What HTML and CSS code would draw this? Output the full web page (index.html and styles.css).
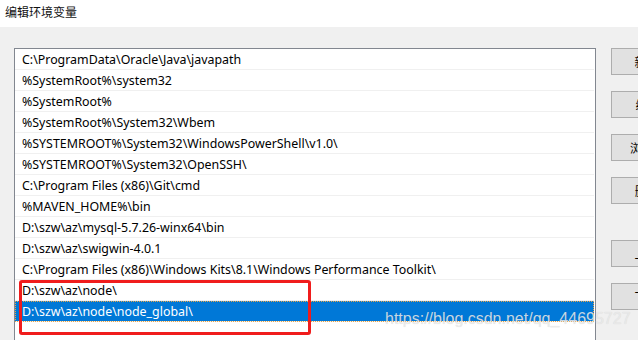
FILE: index.html
```html
<!DOCTYPE html>
<html lang="zh-CN">
<head>
  <meta charset="UTF-8">
  <title>编辑环境变量</title>
  <link rel="stylesheet" href="styles.css">
</head>
<body>

<div class="window">
  <div class="titlebar">编辑环境变量</div>

  <div class="content">
    <div class="pathlist">
      <div class="row">C:\ProgramData\Oracle\Java\javapath</div>
      <div class="row">%SystemRoot%\system32</div>
      <div class="row">%SystemRoot%</div>
      <div class="row">%SystemRoot%\System32\Wbem</div>
      <div class="row">%SYSTEMROOT%\System32\WindowsPowerShell\v1.0\</div>
      <div class="row">%SYSTEMROOT%\System32\OpenSSH\</div>
      <div class="row">C:\Program Files (x86)\Git\cmd</div>
      <div class="row">%MAVEN_HOME%\bin</div>
      <div class="row">D:\szw\az\mysql-5.7.26-winx64\bin</div>
      <div class="row">D:\szw\az\swigwin-4.0.1</div>
      <div class="row">C:\Program Files (x86)\Windows Kits\8.1\Windows Performance Toolkit\</div>
      <div class="row">D:\szw\az\node\</div>
      <div class="row selected">D:\szw\az\node\node_global\</div>
      <div class="row empty"></div>
    </div>

    <div class="actions">
      <button class="btn">新建(N)</button>
      <button class="btn">编辑(E)</button>
      <button class="btn">浏览(B)...</button>
      <button class="btn">删除(D)</button>
      <button class="btn gap">上移(U)</button>
      <button class="btn">下移(O)</button>
    </div>
  </div>

  <!-- annotation + watermark drawn over the dialog -->
  <div class="mark"></div>
  <div class="watermark">https://blog.csdn.net/qq_44695727</div>
</div>

</body>
</html>
```

FILE: styles.css
```css
body {
  margin: 0;
  padding: 0;
  background-color: #f0f0f0;
  font-family: "Noto Sans", "Noto Sans CJK SC", sans-serif;
  font-size: 12px;
  color: #000;
}
.window {
  position: relative;
  width: 638px;
  height: 340px;
  overflow: hidden;
}
.titlebar {
  height: 27px;
  line-height: 24px;
  padding-left: 5px;
  background-color: #fff;
  font-family: "Noto Sans CJK SC", sans-serif;
  font-size: 12px;
  color: #111;
}
.content {
  display: flex;
  align-items: flex-start;
  padding: 21px 0 0 14px;
}
.pathlist {
  width: 580px;
  height: 300px;
  flex-shrink: 0;
  background-color: #fff;
  border: 1px solid #828790;
  border-bottom: none;
}
.row {
  height: 20px;
  line-height: 22px;
  padding-left: 7px;
  margin-right: 1px;
  border-bottom: 1px solid #f0f0f0;
  font-size: 12.4px;
  white-space: nowrap;
  overflow: hidden;
}
.row.selected {
  background-color: #0078d7;
  color: #fff;
  outline: 1px dotted #e8a64a;
  outline-offset: -1px;
}
.row.empty {
  border-bottom: none;
}
.actions {
  display: flex;
  flex-direction: column;
  gap: 16px;
  margin-left: 15px;
  flex-shrink: 0;
}
.btn {
  width: 88px;
  height: 27px;
  padding: 0;
  background-color: #e1e1e1;
  border: 1px solid #adadad;
  border-radius: 0;
  font-family: "Noto Sans CJK SC", sans-serif;
  font-size: 12px;
  color: #000;
  text-align: center;
}
.btn.gap {
  margin-top: 20px;
}
.mark {
  position: absolute;
  left: 19px;
  top: 280px;
  width: 286px;
  height: 49px;
  border: 3px solid #f01c1c;
  border-radius: 3px;
}
.watermark {
  position: absolute;
  left: 385px;
  top: 310px;
  font-family: "Liberation Sans", Arial, sans-serif;
  font-size: 16px;
  color: rgba(236, 236, 236, 0.85);
  text-shadow: 0 0 1px rgba(0, 0, 0, 0.12);
  white-space: nowrap;
}
```
